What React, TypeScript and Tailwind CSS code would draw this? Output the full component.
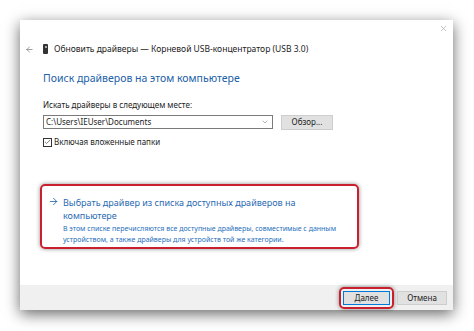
import { ArrowLeft, ArrowRight, ChevronDown, X, Check } from "lucide-react";

export default function App() {
  return (
    <div
      className="w-[474px] h-[331px] bg-white pt-[20px] pl-[20px] overflow-hidden"
      style={{ fontFamily: '"Noto Sans", "Open Sans", sans-serif' }}
    >
      {/* Dialog window */}
      <div className="w-[433px] h-[290px] bg-white flex flex-col shadow-[0_4px_14px_rgba(0,0,0,0.6)]">
        <div className="flex justify-end pt-[4px] pr-[5px] h-[16px]">
          <X className="w-[9px] h-[9px] text-[#9a9a9a]" strokeWidth={1.5} />
        </div>

        {/* Title row */}
        <div className="flex items-center mt-[6px] pl-[5px] h-[14px]">
          <ArrowLeft className="w-[9px] h-[9px] text-[#555]" strokeWidth={1.5} />
          <div className="ml-[9px] w-[5px] h-[10px] bg-[#333] rounded-[1px] flex justify-center">
            <div className="mt-[2px] w-[2px] h-[2px] bg-[#aaa]" />
          </div>
          <span className="ml-[6px] text-[8.5px] text-[#222] leading-none">
            Обновить драйверы — Корневой USB-концентратор (USB 3.0)
          </span>
        </div>

        <div className="pl-[23px] flex flex-col">
          <h1 className="mt-[17px] text-[10.5px] text-[#2160a8] leading-none">
            Поиск драйверов на этом компьютере
          </h1>

          <div className="mt-[17px] text-[8px] text-[#222] leading-none">
            Искать драйверы в следующем месте:
          </div>

          <div className="mt-[6px] flex items-center gap-[8px]">
            <div className="w-[230px] h-[14px] border border-[#7a7a7a] flex items-center justify-between pl-[2px] pr-[3px]">
              <span className="text-[8px] text-[#222] leading-none">C:\Users\IEUser\Documents</span>
              <ChevronDown className="w-[8px] h-[8px] text-[#666]" strokeWidth={1.5} />
            </div>
            <div className="w-[52px] h-[15px] bg-[#e1e1e1] border border-[#cdcdcd] flex items-center justify-center text-[8px] text-[#222] leading-none">
              Обзор...
            </div>
          </div>

          <div className="mt-[8px] flex items-center">
            <div className="w-[9px] h-[9px] border border-[#333] flex items-center justify-center">
              <Check className="w-[8px] h-[8px] text-[#222]" strokeWidth={2} />
            </div>
            <span className="ml-[2px] text-[8px] text-[#222] leading-none">
              Включая вложенные папки
            </span>
          </div>
        </div>

        {/* Highlighted option */}
        <div className="ml-[20px] mt-[37px] w-[319px] h-[65px] border-2 border-[#c8202f] rounded-[5px] shadow-[0_0_4px_rgba(0,0,0,0.45)] flex pl-[6px] pt-[10px]">
          <ArrowRight className="w-[11px] h-[11px] text-[#1c5ea8]" strokeWidth={1.75} />
          <div className="ml-[4px] flex flex-col">
            <div className="text-[9px] leading-[13px] text-[#2a6bb3] whitespace-nowrap">
              Выбрать драйвер из списка доступных драйверов на
              <br />
              компьютере
            </div>
            <div className="mt-[1px] text-[7px] leading-[11px] text-[#1f6fbd] whitespace-nowrap">
              В этом списке перечисляются все доступные драйверы, совместимые с данным
              <br />
              устройством, а также драйверы для устройств той же категории.
            </div>
          </div>
        </div>

        <div className="flex-1" />

        {/* Footer */}
        <div className="h-[25px] bg-[#f0f0f0] flex items-center justify-end pr-[6px] gap-[3px]">
          <div className="rounded-[5px] border-2 border-[#c8202f] p-[2px] shadow-[0_0_4px_rgba(0,0,0,0.45)]">
            <div className="w-[47px] h-[14px] bg-[#e1e1e1] border border-[#0078d7] flex items-center justify-center text-[8px] text-[#222] leading-none">
              Далее
            </div>
          </div>
          <div className="w-[50px] h-[14px] bg-[#e1e1e1] border border-[#cdcdcd] flex items-center justify-center text-[8px] text-[#222] leading-none">
            Отмена
          </div>
        </div>
      </div>
    </div>
  );
}
